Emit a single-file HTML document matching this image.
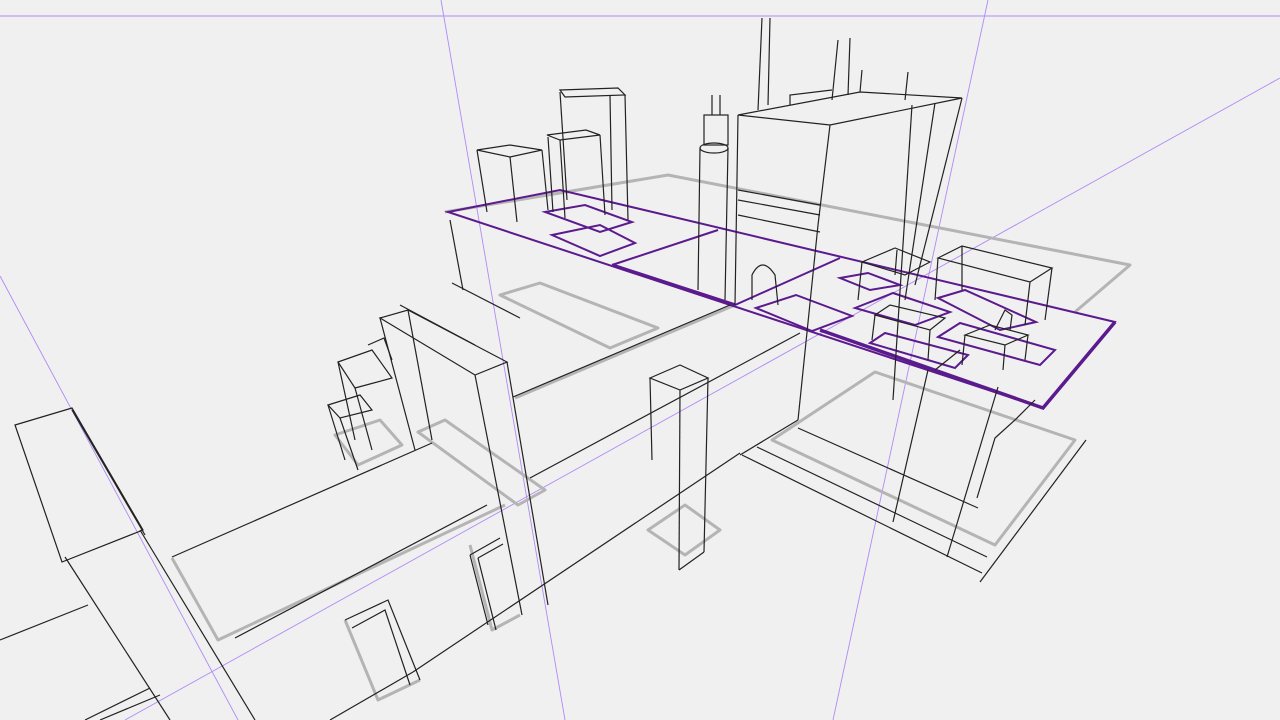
<!DOCTYPE html>
<html><head><meta charset="utf-8"><style>
html,body{margin:0;padding:0;background:#f0f0f0;width:1280px;height:720px;overflow:hidden}
svg{display:block}
.k{stroke:#222;stroke-width:1.2;fill:none}
.g{stroke:#b4b4b4;stroke-width:3;fill:none;stroke-linejoin:round}
.p{stroke:#5b1a8e;stroke-width:2;fill:none}
.pp{stroke:#5b1a8e;stroke-width:3.5;fill:none}
.v{stroke:#b08af5;stroke-width:0.9;fill:none}
</style></head><body>
<svg width="1280" height="720" viewBox="0 0 1280 720">
<!-- guides -->
<line class="v" x1="0" y1="16" x2="1280" y2="16"/>
<line class="v" x1="441" y1="0" x2="565" y2="720"/>
<line class="v" x1="988" y1="0" x2="833" y2="720"/>
<line class="v" x1="1280" y1="78" x2="125" y2="720"/>
<line class="v" x1="0" y1="276" x2="238" y2="720"/>

<!-- grey shapes -->
<polyline class="g" points="445,212 668,175 1130,265 1075,312"/>
<polygon class="g" points="500,295 540,283 658,328 610,348"/>
<polygon class="g" points="418,432 445,420 545,490 518,505"/>
<polygon class="g" points="335,435 380,420 402,445 358,465"/>
<polygon class="g" points="648,530 685,505 720,530 685,555"/>
<polygon class="g" points="772,440 875,372 1075,440 995,545"/>
<polyline class="g" points="172,558 218,640 505,505"/>
<polyline class="g" points="470,545 492,630 520,615"/>
<polyline class="g" points="345,620 378,700 420,680"/>
<line class="g" x1="515" y1="398" x2="735" y2="305"/>

<!-- purple platform -->
<polygon class="p" points="448,212 560,190 1115,322 1043,408"/>
<polyline class="pp" points="1115,322 1043,408 820,330"/>
<line class="pp" x1="612" y1="265" x2="735" y2="305"/>
<line class="p" x1="612" y1="265" x2="718" y2="230"/>
<polygon class="p" points="552,235 600,225 635,243 600,256"/>
<polygon class="p" points="545,212 585,205 632,222 600,232"/>
<polygon class="p" points="756,308 796,295 852,316 812,331"/>
<line class="p" x1="735" y1="305" x2="840" y2="258"/>
<polygon class="p" points="840,278 868,273 900,285 870,290"/>
<polygon class="p" points="870,343 885,333 968,355 955,368"/>
<polygon class="p" points="938,337 960,323 1055,350 1040,365"/>
<polygon class="p" points="938,298 965,290 1036,322 1000,330"/>
<polygon class="p" points="855,308 893,293 950,312 915,325"/>

<!-- left tall block -->
<polygon class="k" points="15,425 72,408 143,530 62,562"/>
<line class="k" x1="72" y1="410" x2="145" y2="535"/>
<line class="k" x1="140" y1="530" x2="255" y2="720"/>
<line class="k" x1="65" y1="557" x2="170" y2="720"/>
<line class="k" x1="0" y1="640" x2="88" y2="605"/>
<line class="k" x1="85" y1="720" x2="150" y2="688"/>
<line class="k" x1="100" y1="720" x2="160" y2="695"/>

<!-- long building -->
<line class="k" x1="172" y1="557" x2="432" y2="443"/>
<line class="k" x1="235" y1="638" x2="487" y2="505"/>
<line class="k" x1="530" y1="478" x2="800" y2="333"/>
<line class="k" x1="330" y1="720" x2="413" y2="672"/>
<line class="k" x1="413" y1="672" x2="740" y2="453"/>
<line class="k" x1="513" y1="397" x2="730" y2="305"/>
<line class="k" x1="400" y1="305" x2="475" y2="345"/>
<polyline class="k" points="470,555 500,538"/>
<polyline class="k" points="470,555 488,625"/>
<polyline class="k" points="478,558 503,544"/>
<polyline class="k" points="478,558 496,630"/>
<polyline class="k" points="345,620 388,600 420,680"/>
<polyline class="k" points="352,628 385,610 410,685"/>

<!-- pillar -->
<polygon class="k" points="380,318 408,310 507,362 475,375"/>
<line class="k" x1="475" y1="375" x2="522" y2="615"/>
<line class="k" x1="507" y1="362" x2="548" y2="605"/>
<line class="k" x1="380" y1="318" x2="415" y2="450"/>
<line class="k" x1="408" y1="310" x2="432" y2="440"/>
<polygon class="k" points="338,362 372,350 392,378 355,388"/>
<line class="k" x1="338" y1="362" x2="355" y2="440"/>
<line class="k" x1="355" y1="388" x2="372" y2="450"/>
<polygon class="k" points="328,405 360,395 372,410 340,418"/>
<line class="k" x1="328" y1="405" x2="345" y2="460"/>
<line class="k" x1="340" y1="418" x2="358" y2="470"/>
<polyline class="k" points="368,345 384,338 392,360"/>

<!-- middle pillar -->
<polygon class="k" points="650,378 680,365 708,378 680,390"/>
<line class="k" x1="650" y1="378" x2="652" y2="460"/>
<line class="k" x1="680" y1="390" x2="679" y2="570"/>
<line class="k" x1="708" y1="378" x2="704" y2="552"/>
<line class="k" x1="679" y1="570" x2="704" y2="552"/>

<!-- right lower building -->
<line class="k" x1="798" y1="428" x2="978" y2="508"/>
<line class="k" x1="742" y1="455" x2="982" y2="573"/>
<line class="k" x1="757" y1="447" x2="987" y2="557"/>
<line class="k" x1="980" y1="582" x2="1086" y2="440"/>
<line class="k" x1="740" y1="455" x2="798" y2="420"/>
<line class="k" x1="798" y1="420" x2="818" y2="225"/>
<line class="k" x1="893" y1="522" x2="928" y2="370"/>
<line class="k" x1="947" y1="557" x2="998" y2="387"/>
<polyline class="k" points="977,498 995,438 1015,420 1035,400"/>
<line class="k" x1="935" y1="370" x2="960" y2="350"/>

<!-- tall building -->
<polygon class="k" points="738,115 830,125 962,98 860,92"/>
<line class="k" x1="738" y1="115" x2="735" y2="305"/>
<line class="k" x1="830" y1="125" x2="818" y2="225"/>
<line class="k" x1="912" y1="105" x2="893" y2="400"/>
<line class="k" x1="935" y1="103" x2="905" y2="300"/>
<line class="k" x1="962" y1="98" x2="915" y2="285"/>
<line class="k" x1="738" y1="190" x2="820" y2="205"/>
<line class="k" x1="738" y1="200" x2="820" y2="215"/>
<line class="k" x1="738" y1="215" x2="820" y2="232"/>
<path class="k" d="M752,300 L752,275 Q762,255 775,275 L778,305"/>
<!-- chimney -->
<line class="k" x1="700" y1="148" x2="698" y2="290"/>
<line class="k" x1="728" y1="148" x2="725" y2="300"/>
<ellipse class="k" cx="714" cy="148" rx="14" ry="5"/>
<rect class="k" x="704" y="115" width="24" height="30"/>
<line class="k" x1="712" y1="95" x2="712" y2="115"/>
<line class="k" x1="720" y1="95" x2="720" y2="115"/>
<!-- antennas -->
<line class="k" x1="762" y1="18" x2="758" y2="110"/>
<line class="k" x1="770" y1="18" x2="768" y2="105"/>
<line class="k" x1="838" y1="40" x2="832" y2="100"/>
<line class="k" x1="850" y1="38" x2="848" y2="95"/>
<line class="k" x1="862" y1="70" x2="860" y2="92"/>
<line class="k" x1="908" y1="72" x2="905" y2="100"/>
<polyline class="k" points="790,105 790,95 832,90"/>

<!-- top left towers -->
<polygon class="k" points="477,150 510,145 542,150 510,157"/>
<line class="k" x1="477" y1="150" x2="487" y2="212"/>
<line class="k" x1="510" y1="157" x2="517" y2="222"/>
<line class="k" x1="542" y1="150" x2="548" y2="210"/>
<polygon class="k" points="547,135 586,130 600,135 560,140"/>
<line class="k" x1="548" y1="137" x2="553" y2="212"/>
<line class="k" x1="560" y1="140" x2="565" y2="218"/>
<line class="k" x1="600" y1="135" x2="605" y2="215"/>
<polygon class="k" points="560,90 618,88 625,95 565,97"/>
<line class="k" x1="560" y1="92" x2="567" y2="200"/>
<line class="k" x1="625" y1="95" x2="628" y2="220"/>
<line class="k" x1="610" y1="95" x2="612" y2="210"/>
<line class="k" x1="450" y1="220" x2="463" y2="290"/>
<line class="k" x1="452" y1="283" x2="520" y2="318"/>

<!-- right upper boxes -->
<polygon class="k" points="938,258 962,246 1052,268 1030,282"/>
<line class="k" x1="938" y1="258" x2="935" y2="300"/>
<line class="k" x1="962" y1="246" x2="962" y2="290"/>
<line class="k" x1="1030" y1="282" x2="1025" y2="325"/>
<line class="k" x1="1052" y1="268" x2="1045" y2="320"/>
<polygon class="k" points="862,262 895,248 930,262 905,275"/>
<line class="k" x1="862" y1="262" x2="858" y2="300"/>
<line class="k" x1="897" y1="250" x2="895" y2="275"/>
<polygon class="k" points="875,315 890,305 945,318 930,330"/>
<line class="k" x1="875" y1="315" x2="872" y2="340"/>
<line class="k" x1="930" y1="330" x2="928" y2="360"/>
<polygon class="k" points="965,335 990,325 1028,335 1005,345"/>
<line class="k" x1="965" y1="335" x2="962" y2="365"/>
<line class="k" x1="1005" y1="345" x2="1003" y2="370"/>
<line class="k" x1="1028" y1="335" x2="1025" y2="360"/>
<polyline class="k" points="995,330 1005,310 1012,315 1010,330"/>
</svg>
</body></html>
